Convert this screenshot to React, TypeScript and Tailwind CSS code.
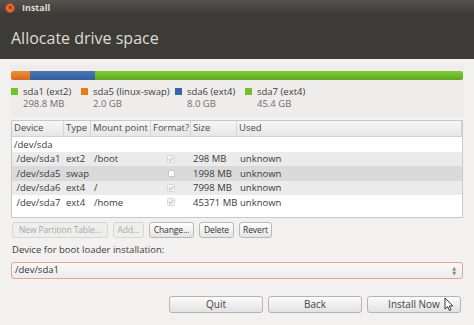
import React from 'react'

const FONT = { fontFamily: '"Open Sans", "DejaVu Sans", sans-serif' }

const LEGEND = [
  { color: 'bg-[#73c12b]', name: 'sda1 (ext2)', size: '298.8 MB', w: 'w-[70px]' },
  { color: 'bg-[#e57d1f]', name: 'sda5 (linux-swap)', size: '2.0 GB', w: 'w-[94px]' },
  { color: 'bg-[#3a66a6]', name: 'sda6 (ext4)', size: '8.0 GB', w: 'w-[70px]' },
  { color: 'bg-[#73c12b]', name: 'sda7 (ext4)', size: '45.4 GB', w: 'w-[70px]' },
]

type Row = { dev: string; type: string; mount: string; fmt: 'on' | 'off' | null; size: string; used: string; bg: string }

const ROWS: Row[] = [
  { dev: '/dev/sda', type: '', mount: '', fmt: null, size: '', used: '', bg: 'bg-white' },
  { dev: ' /dev/sda1', type: 'ext2', mount: '/boot', fmt: 'on', size: '298 MB', used: 'unknown', bg: 'bg-[#ebebeb]' },
  { dev: ' /dev/sda5', type: 'swap', mount: '', fmt: 'off', size: '1998 MB', used: 'unknown', bg: 'bg-[#dadada]' },
  { dev: ' /dev/sda6', type: 'ext4', mount: '/', fmt: 'on', size: '7998 MB', used: 'unknown', bg: 'bg-[#ebebeb]' },
  { dev: ' /dev/sda7', type: 'ext4', mount: '/home', fmt: 'on', size: '45371 MB', used: 'unknown', bg: 'bg-white' },
]

const COLS: [string, string][] = [
  ['Device', 'w-[52px]'],
  ['Type', 'w-[27px]'],
  ['Mount point', 'w-[60px]'],
  ['Format?', 'w-[40px]'],
  ['Size', 'w-[46px]'],
  ['Used', 'flex-1'],
]

function Check({ state }: { state: 'on' | 'off' | null }) {
  if (!state) return null
  if (state === 'off') return <div className="w-[7px] h-[7px] bg-white border border-[#c8c8c8] rounded-[1px]" />
  return (
    <svg width="8" height="8" viewBox="0 0 8 8">
      <rect x="0.5" y="0.5" width="7" height="7" rx="1" fill="#f4f4f4" stroke="#d6d6d6" />
      <path d="M1.8 4.2 L3.3 5.6 L6.2 2.4" stroke="#c4c4c4" strokeWidth="1.1" fill="none" />
    </svg>
  )
}

function SmallBtn({ children, disabled, w }: { children: React.ReactNode; disabled?: boolean; w: string }) {
  return (
    <div
      className={`${w} h-[16px] flex items-center justify-center whitespace-nowrap rounded-[3px] border text-[8.5px] tracking-[-0.1px] ${
        disabled ? 'border-[#d6d6d6] text-[#a8a8a8] bg-[#eeeeed]' : 'border-[#b8b8b8] text-[#333] bg-gradient-to-b from-white to-[#e4e4e4]'
      }`}
    >
      {children}
    </div>
  )
}

function BigBtn({ children }: { children: React.ReactNode }) {
  return (
    <div className="w-[94px] h-[17px] flex items-center justify-center rounded-[3px] border border-[#b4b4b4] text-[10px] text-[#444] bg-gradient-to-b from-[#fbfbfb] to-[#e2e2e2]">
      {children}
    </div>
  )
}

export default function App() {
  return (
    <div className="relative w-[474px] h-[325px] bg-[#f2f1f0] overflow-hidden" style={FONT}>
      {/* header */}
      <div className="h-[59px] bg-[#3c3b37] flex flex-col">
        <div className="h-[15px] flex items-center gap-[7px] pl-[5px] bg-gradient-to-b from-[#55534e] to-[#3c3b37]">
          <div className="w-[10px] h-[10px] rounded-full bg-[#f0672c] border border-[#b9441a] flex items-center justify-center">
            <span className="text-[7px] leading-none text-[#3c3b37] font-bold">×</span>
          </div>
          <span className="text-[9px] font-bold text-[#dfdbd2]">Install</span>
        </div>
        <div className="pl-[11px] pt-[15px] text-[16px] leading-none text-[#dfdbd2]">Allocate drive space</div>
      </div>

      {/* partition bar + legend */}
      <div className="mx-[10px] mt-[6px] h-[52px] bg-[#eeedec] pt-[6px] px-[1px]">
        <div className="h-[9px] flex rounded-[2px] overflow-hidden">
          <div className="w-[19px] bg-gradient-to-b from-[#f0903a] to-[#d2691a]" />
          <div className="w-[65px] bg-gradient-to-b from-[#4a76b4] to-[#33609c]" />
          <div className="flex-1 bg-gradient-to-b from-[#80cc35] to-[#5ea824]" />
        </div>
        <div className="flex mt-[6px] text-[9.5px] leading-[12px]">
          {LEGEND.map((l) => (
            <div key={l.name} className={`flex ${l.w}`}>
              <div className={`w-[7px] h-[7px] mt-[2px] ${l.color}`} />
              <div className="ml-[5px]">
                <div className="text-[#3c3c3c] whitespace-nowrap">{l.name}</div>
                <div className="text-[#6e6e6e]">{l.size}</div>
              </div>
            </div>
          ))}
        </div>
      </div>

      {/* table */}
      <div className="mx-[11px] mt-[3px] h-[98px] border border-[#c9c9c9] bg-white text-[9.5px] text-[#3a3a3a]">
        <div className="flex h-[16px] items-center bg-gradient-to-b from-[#f7f7f7] to-[#e6e6e6] border-b border-[#d2d2d2]">
          {COLS.map(([t, w]) => (
            <div key={t} className={`${w} h-full flex items-center pl-[2px] whitespace-nowrap overflow-hidden border-r border-[#d6d6d6] text-[#4a4a4a]`}>
              {t}
            </div>
          ))}
        </div>
        {ROWS.map((r, i) => (
          <div key={i} className={`flex h-[14.5px] items-center ${r.bg} leading-none`}>
            <div className="w-[52px] pl-[2px] whitespace-pre">{r.dev}</div>
            <div className="w-[27px] pl-[2px]">{r.type}</div>
            <div className="w-[60px] pl-[3px]">{r.mount}</div>
            <div className="w-[40px] flex justify-center"><Check state={r.fmt} /></div>
            <div className="w-[46px] pl-[2px] whitespace-nowrap">{r.size}</div>
            <div className="flex-1 pl-[3px]">{r.used}</div>
          </div>
        ))}
      </div>

      {/* partition buttons */}
      <div className="flex gap-[5px] ml-[12px] mt-[4px]">
        <SmallBtn disabled w="w-[96px]">New Partition Table...</SmallBtn>
        <SmallBtn disabled w="w-[31px]">Add...</SmallBtn>
        <SmallBtn w="w-[45px]">Change...</SmallBtn>
        <SmallBtn w="w-[35px]">Delete</SmallBtn>
        <SmallBtn w="w-[33px]">Revert</SmallBtn>
      </div>

      <div className="ml-[12px] mt-[6px] text-[9.5px] text-[#3c3c3c] leading-[12px]">Device for boot loader installation:</div>

      <div className="mx-[11px] mt-[6px] h-[17px] rounded-[3px] border border-[#e5a496] bg-gradient-to-b from-[#f8f8f8] to-[#ececec] flex items-center justify-between pl-[3px] pr-[6px] text-[9.5px] text-[#333]">
        <span>/dev/sda1</span>
        <span className="flex flex-col text-[5px] leading-[5px] text-[#888]">
          <span>▲</span>
          <span>▼</span>
        </span>
      </div>

      <div className="flex justify-end gap-[5px] mr-[13px] mt-[17px]">
        <BigBtn>Quit</BigBtn>
        <BigBtn>Back</BigBtn>
        <BigBtn>Install Now</BigBtn>
      </div>

      {/* mouse cursor */}
      <svg className="absolute left-[444px] top-[297px]" width="10" height="15" viewBox="0 0 10 15">
        <path d="M1 1 L1 12 L3.6 9.6 L5.4 13.6 L7 12.9 L5.3 9 L8.8 9 Z" fill="white" stroke="#222" strokeWidth="0.9" strokeLinejoin="round" />
      </svg>
    </div>
  )
}
